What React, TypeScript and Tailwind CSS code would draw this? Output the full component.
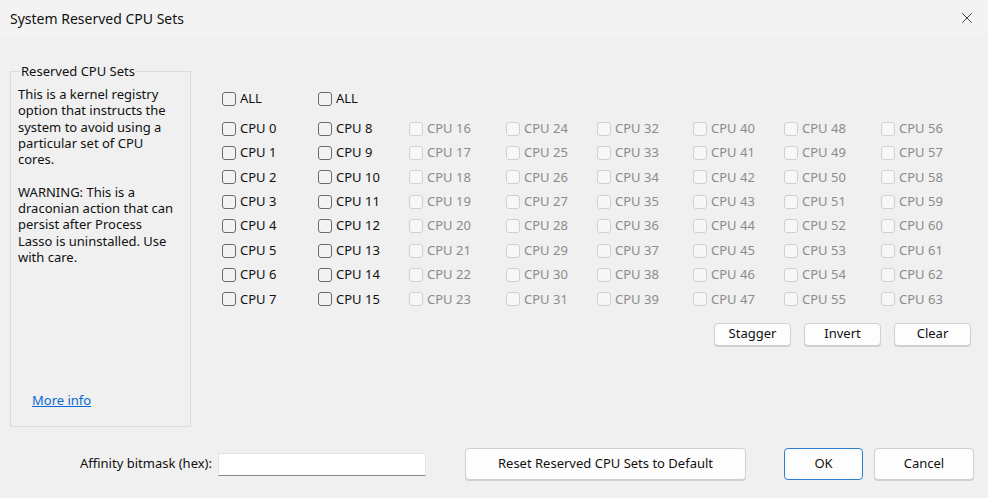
import { X } from "lucide-react";

const COL_WIDTHS = "grid-cols-[96px_91px_97px_91px_96px_91px_97px_90px]";

const DESCRIPTION = [
  "This is a kernel registry",
  "option that instructs the",
  "system to avoid using a",
  "particular set of CPU",
  "cores.",
  "",
  "WARNING: This is a",
  "draconian action that can",
  "persist after Process",
  "Lasso is uninstalled. Use",
  "with care.",
];

function Box({ disabled }: { disabled?: boolean }) {
  return (
    <span
      className={
        disabled
          ? "inline-block h-[14px] w-[14px] shrink-0 rounded-[3px] border border-[#d0d0d0] bg-[#f7f7f7]"
          : "inline-block h-[14px] w-[14px] shrink-0 rounded-[3px] border border-[#6b6b6b] bg-[#f3f3f3]"
      }
    />
  );
}

function Check({ label, disabled }: { label: string; disabled?: boolean }) {
  return (
    <label className="flex h-[24.4px] items-center gap-[4px]">
      <Box disabled={disabled} />
      <span className={disabled ? "text-[#8c8c8c]" : "text-[#111]"}>{label}</span>
    </label>
  );
}

function Btn({ children, className }: { children: React.ReactNode; className: string }) {
  return (
    <button
      className={
        "rounded-[4px] border border-[#d0d0d0] bg-[#fdfdfd] text-[13px] text-[#111] shadow-[0_1px_0_#cfcfcf] " +
        className
      }
    >
      {children}
    </button>
  );
}

export default function App() {
  const rows = Array.from({ length: 8 }, (_, r) => r);
  const cols = Array.from({ length: 8 }, (_, c) => c);

  return (
    <div className="flex h-[498px] w-[988px] flex-col bg-[#f0f0f0] text-[13px] font-['Segoe_UI','Noto_Sans',sans-serif] text-[#111]">
      {/* title bar */}
      <header className="flex h-[36px] items-center justify-between bg-[#f3f3f3] pl-[10px] pr-[12px]">
        <span className="text-[14px]">System Reserved CPU Sets</span>
        <X size={18} strokeWidth={1.1} className="text-[#222]" />
      </header>

      <div className="flex gap-[31px] pl-[10px] pt-[27px]">
        {/* group box */}
        <fieldset className="flex h-[364px] w-[181px] flex-col border border-[#dcdcdc] px-[7px] pb-[16px] pt-[2px]">
          <legend className="ml-[2px] px-[1px] leading-[16px]">Reserved CPU Sets</legend>
          <div className="mt-[5px] leading-[16.3px]">
            {DESCRIPTION.map((line, i) => (
              <div key={i} className="h-[16.3px] whitespace-nowrap">
                {line}
              </div>
            ))}
          </div>
          <a className="mt-auto ml-[14px] text-[#0b6bd3] underline">More info</a>
        </fieldset>

        {/* checkbox grid */}
        <div className="flex flex-col pt-[24px]">
          <div className={"grid " + COL_WIDTHS + " mb-[5px]"}>
            <Check label="ALL" />
            <Check label="ALL" />
          </div>
          <div className={"grid grid-flow-col grid-rows-8 " + COL_WIDTHS}>
            {cols.map((c) =>
              rows.map((r) => {
                const n = c * 8 + r;
                return <Check key={n} label={`CPU ${n}`} disabled={n >= 16} />;
              })
            )}
          </div>
          <div className="mt-[11px] flex justify-end gap-[13px]">
            <Btn className="h-[23px] w-[77px]">Stagger</Btn>
            <Btn className="h-[23px] w-[77px]">Invert</Btn>
            <Btn className="h-[23px] w-[77px]">Clear</Btn>
          </div>
        </div>
      </div>

      {/* bottom row */}
      <div className="mt-[21px] flex items-center">
        <span className="w-[212px] text-right">Affinity bitmask (hex):</span>
        <input className="ml-[6px] h-[23px] w-[208px] border border-[#e3e3e3] border-b-[#8a8a8a] bg-white outline-none" />
        <Btn className="ml-[39px] h-[32px] w-[281px]">Reset Reserved CPU Sets to Default</Btn>
        <button className="ml-[38px] h-[32px] w-[79px] rounded-[4px] border border-[#2a7fd4] bg-[#fdfdfd] text-[13px]">
          OK
        </button>
        <Btn className="ml-[11px] h-[32px] w-[100px]">Cancel</Btn>
      </div>
    </div>
  );
}
